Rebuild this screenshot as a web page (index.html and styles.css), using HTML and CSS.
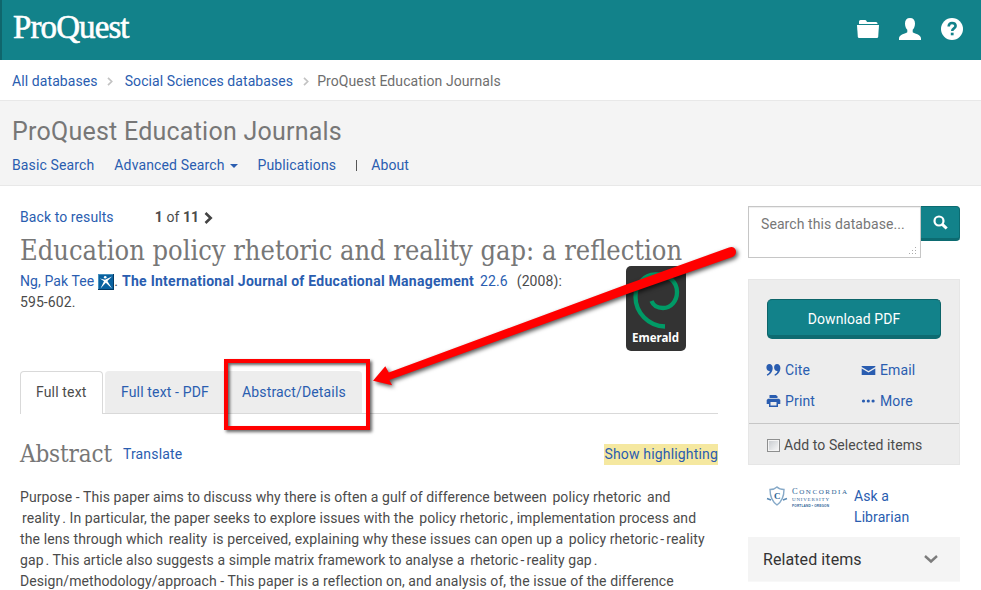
FILE: index.html
```html
<!DOCTYPE html>
<html lang="en">
<head>
<meta charset="utf-8">
<title>ProQuest Education Journals</title>
<link rel="stylesheet" href="styles.css">
</head>
<body>
<header class="topbar">
  <span class="logo">ProQuest</span>
  <nav class="top-icons">
    <svg width="24" height="20" viewBox="0 0 24 20" fill="#fff"><path d="M3 5V2.500Q3 1 4.500 1H9q1 0 1.500 1l.5 1h9q1.500 0 1.500 1.500V5z"/><path d="M1 6h22l-.8 11.700q-.1 1.300-1.400 1.300H3.200q-1.300 0-1.400-1.300z"/></svg>
    <svg width="24" height="24" viewBox="0 0 24 24" fill="#fff"><path d="M12 1c3.300 0 5 2 5 5.500 0 2.800-1 5-2.300 6.300v2.500c1.500 1.500 8.300 2 8.300 6.200V23H1v-1.500c0-4.200 6.800-4.700 8.300-6.200v-2.500C8 11.500 7 9.300 7 6.500 7 3 8.700 1 12 1z"/></svg>
    <svg width="24" height="24" viewBox="0 0 24 24"><circle cx="12" cy="12" r="11" fill="#fff"/><path d="M8.700 9.500C8.700 7 10 6 12 6s3.600 1 3.600 3c0 2.400-3.400 2.400-3.400 5" fill="none" stroke="#12828a" stroke-width="2.600"/><rect x="10.800" y="15.700" width="2.800" height="2.600" fill="#12828a"/></svg>
  </nav>
</header>
<nav class="crumbs">
  <a>All databases</a>
  <svg class="sep" width="6" height="9" viewBox="0 0 6 9"><path d="M1 .8 4.700 4.500 1 8.200"/></svg>
  <a>Social Sciences databases</a>
  <svg class="sep" width="6" height="9" viewBox="0 0 6 9"><path d="M1 .8 4.700 4.500 1 8.200"/></svg>
  <span class="here">ProQuest Education Journals</span>
</nav>
<section class="banner">
  <h1>ProQuest Education Journals</h1>
  <nav class="links">
    <a>Basic Search</a>
    <a class="adv">Advanced Search<i class="caret"></i></a>
    <a>Publications</a>
    <i class="bar"></i>
    <a>About</a>
  </nav>
</section>
<div class="page">
  <main>
    <div class="pager"><a>Back to results</a><span class="count"><b>1</b> of <b>11</b></span><svg width="9" height="12" viewBox="0 0 9 12"><path d="M1.500 1 6.700 6l-5.200 5" fill="none" stroke="#444" stroke-width="2.600"/></svg></div>
    <h2>Education policy rhetoric and reality gap: a reflection</h2>
    <div class="source">
      <div class="cite"><a>Ng, Pak Tee</a><svg class="auth" width="16" height="16" viewBox="0 0 16 16"><rect width="16" height="16" fill="#0a62a0"/><path d="M0 .5h16M.5 0v16" stroke="#4690bd"/><path d="M15.500 0v16M0 15.500h16" stroke="#053b66"/><path d="M2 4.500l5 1.200L14 2.500 9.400 7.100l4.600 7.400-6.200-5.700L2.500 14.500 6 7.300z" fill="#fff"/><circle cx="7.200" cy="3.200" r="1.300" fill="#fff"/></svg><span>.</span><a class="journal">The International Journal of Educational Management</a><a class="issue">22.6</a><span>(2008):</span></div>
      <div>595-602.</div>
      <svg class="emerald" width="60" height="85" viewBox="0 0 60 85"><rect width="60" height="85" rx="5" fill="#333"/><path d="M39 60.500C22 60 9.500 46 9.500 31c0-13 8-22 20-22.500C43 8 51 16 51 26c0 9-6 16-14 16-5 0-9.500-2-11.500-7" fill="none" stroke="#009a66" stroke-width="4.300"/><text x="6" y="76" textLength="47" lengthAdjust="spacingAndGlyphs">Emerald</text></svg>
    </div>
    <div class="tabs"><a class="tab on">Full text</a><a class="tab pdf">Full text - PDF</a><a class="tab last">Abstract/Details</a></div>
    <div class="abs-head"><h3>Abstract</h3><a>Translate</a><a class="show">Show highlighting</a></div>
    <div class="abstract">
      <div>Purpose - This paper aims to discuss why there is often a gulf of difference between <i>policy rhetoric</i> and</div>
      <div><i>reality</i>. In particular, the paper seeks to explore issues with the <i>policy rhetoric</i>, implementation process and</div>
      <div class="wide">the lens through which <i>reality</i> is perceived, explaining why these issues can open up a <i>policy rhetoric</i>-<i class="r">reality</i></div>
      <div><i class="l">gap</i>. This article also suggests a simple matrix framework to analyse a <i>rhetoric</i>-<i>reality gap</i>.</div>
      <div>Design/methodology/approach - This paper is a reflection on, and analysis of, the issue of the difference</div>
    </div>
  </main>
  <aside>
    <div class="search"><div class="field"><span>Search this database...</span><svg width="9" height="9" viewBox="0 0 9 9" fill="#aaa"><path d="M7 1h1v1H7zM7 4h1v1H7zM7 7h1v1H7zM4 4h1v1H4zM4 7h1v1H4zM1 7h1v1H1z"/></svg></div><div class="go"><svg width="15" height="15" viewBox="0 0 15 15" fill="none" stroke="#fff"><circle cx="6" cy="6" r="4.500" stroke-width="2.200"/><path d="m9.300 9.300 4.400 4.200" stroke-width="3"/></svg></div></div>
    <div class="actions">
      <a class="download">Download PDF</a>
      <div class="grid">
        <a><svg width="15" height="14" viewBox="0 0 15 14"><path d="M3.300 1C5.500 1 6.700 2.700 6.700 5c0 3.500-2.300 6.600-5.500 7.700L.8 11.600c1.800-.9 2.900-2.200 3-3.600C1.800 8.300.4 6.600.4 4.500.4 2.500 1.500 1 3.300 1z"/><path d="M11 1c2.200 0 3.400 1.700 3.400 4 0 3.500-2.300 6.600-5.500 7.700l-.4-1.100c1.800-.9 2.900-2.200 3-3.600-2 .3-3.400-1.400-3.400-3.500C8.100 2.500 9.200 1 11 1z"/></svg>Cite</a>
        <a><svg width="15" height="14" viewBox="0 0 15 14"><path d="M.7 3h13.600v1L7.500 8 .7 4z"/><path d="M.7 5.500 7.500 9.500l6.800-4V12H.7z"/></svg>Email</a>
        <a><svg width="15" height="14" viewBox="0 0 15 14"><path d="M4 1h6l1.500 1.500V4h-8V1z"/><path fill-rule="evenodd" d="M2 4.800h11l1.300 1.300V10H12v3H3v-3H.7V6.100zM4.500 8v3.600h6V8z"/></svg>Print</a>
        <a><svg width="15" height="14" viewBox="0 0 15 14"><circle cx="2.500" cy="7" r="1.600"/><circle cx="7.300" cy="7" r="1.600"/><circle cx="12.100" cy="7" r="1.600"/></svg>More</a>
      </div>
      <label class="select"><i class="box"></i><span>Add to Selected items</span></label>
    </div>
    <div class="librarian">
      <svg width="82" height="26" viewBox="0 0 82 26" fill="#2d6396"><path d="M11 1C9 3 6 3.500 4 3.500c0 7 1.500 11.500 7 15.500 5.500-4 7-8.500 7-15.500-2 0-5-.5-7-2.500z" fill="none" stroke="#86a9c8" stroke-width="1.400"/><path d="M1 12.500l4 1.500M21 12.500l-4 1.500" stroke="#5c8bb5" stroke-width="1.500"/><text x="8" y="12.500" font-size="9" font-weight="700">C</text><text x="26" y="8" font-size="8.500" textLength="55">C<tspan font-size="7">ONCORDIA</tspan></text><text x="26" y="14.500" font-size="5" textLength="37">UNIVERSITY</text><text class="place" x="26" y="21" font-size="3.200" textLength="37">PORTLAND • OREGON</text></svg>
      <a>Ask a<br>Librarian</a>
    </div>
    <div class="related"><span>Related items</span><svg width="14" height="9" viewBox="0 0 14 9"><path d="m1 1 6 5.500L13 1" fill="none" stroke="#7c7c7c" stroke-width="2.400"/></svg></div>
  </aside>
</div>
<div class="callout"></div>
<svg class="arrow" width="400" height="170" viewBox="350 235 400 170"><path d="M373 380.700 385.300 366.300 388.800 372.600 627 284.300 729 247.400Q734 246 735.700 250 737 254.500 732.500 257L627 294 389.300 380 392.200 385.300z"/></svg>
</body>
</html>
```
FILE: styles.css
```css
* { box-sizing: border-box; }
body { margin: 0; width: 981px; height: 590px; overflow: hidden; background: #fff; color: #4b4b4b; font: 14px/21px Roboto, sans-serif; letter-spacing: .09px; white-space: nowrap; }
a { color: #2a5db0; }
h1, h2, h3 { margin: 0; font-weight: 400; color: #777; }
svg { display: block; flex: none; }
.topbar { height: 60px; background: #12828a; border-left: 2px solid #0f666c; display: flex; justify-content: space-between; padding: 0 17px 0 11px; }
.logo { font: 33px/54px "Liberation Serif", serif; color: #fff; letter-spacing: -.9px; -webkit-text-stroke: .6px #fff; }
.top-icons { display: flex; align-items: center; gap: 18px; height: 58px; }
.crumbs { height: 40px; padding: 2px 12px 0; display: flex; align-items: center; gap: 10px; }
.sep { fill: none; stroke: #c3c3c3; stroke-width: 1.7; margin: 1px 1.5px 0 -.5px; }
.sep ~ .sep { margin-right: -1.5px; }
.here { color: #6e6e6e; }
.banner { height: 86px; background: #f4f4f4; border: 1px solid #e8e8e8; border-width: 1px 0; padding: 14px 12px 0; }
h1 { font-size: 25px; line-height: 33px; height: 32px; letter-spacing: .24px; }
.links { display: flex; align-items: center; margin-top: 8px; gap: 20px; letter-spacing: .13px; }
.adv { display: flex; align-items: center; gap: 6px; }
.caret { border: 4px solid transparent; border-top-color: #2a5db0; border-bottom: 0; margin: 1px -1px 0 0; }
.bar { width: 1px; height: 11px; background: #555; margin-right: -6px; }
.page { display: flex; padding: 20px 0 0 20px; gap: 30px; }
main { width: 698px; padding-top: 1px; }
.pager { display: flex; align-items: center; }
.count { margin: 0 5px 0 41px; }
h2 { font: 27px/45px "DejaVu Serif Condensed", "DejaVu Serif", serif; height: 43px; letter-spacing: 0; }
.source { position: relative; height: 100px; }
.cite { display: flex; }
.auth { margin: 3px 0 0 4px; }
.journal { font-weight: 700; margin-left: 4px; letter-spacing: .26px; }
.issue { margin: 0 9px 0 6px; }
.emerald { position: absolute; left: 606px; top: -5px; }
.emerald text { fill: #fff; font: 700 13px "Noto Sans", sans-serif; letter-spacing: 0; }
.tabs { display: flex; border-bottom: 1px solid #d9d9d9; height: 43px; letter-spacing: .15px; }
.tab { height: 42px; line-height: 42px; padding: 0 15px; background: #ededed; }
.on { height: 43px; width: 83px; border: 1px solid #d9d9d9; border-bottom: 0; border-radius: 4px 4px 0 0; background: #fff; color: #4b4b4b; line-height: 41px; margin-right: 2px; }
.pdf { width: 120px; padding-left: 16px; border-radius: 4px 0 0; }
.last { width: 137px; padding-left: 17px; border-radius: 0 4px 0 0; }
.abs-head { display: flex; align-items: center; height: 40px; margin-top: 20px; letter-spacing: .17px; }
h3 { font: 24px/40px "DejaVu Serif Condensed", "DejaVu Serif", serif; height: 40px; margin-right: 11px; letter-spacing: -.15px; }
.show { background: #f5e8a0; margin-left: auto; }
.abstract { margin-top: 13px; letter-spacing: .075px; }
.abstract .wide { letter-spacing: .11px; }
.abstract i { font-style: normal; padding: 0 2px; }
.abstract .l { padding-left: 0; }
.abstract .r { padding-right: 0; }
aside { width: 212px; }
.search { display: flex; height: 52px; }
.field { width: 173px; border: 1px solid #c6c6c6; padding: 7px 3px 2px 12px; color: #777; box-shadow: inset 0 1px 1px #eee; display: flex; justify-content: space-between; }
.field svg { align-self: flex-end; margin-left: -9px; }
.go { width: 39px; height: 35px; background: #12828a; border: 1px solid #0c6b71; border-left: 0; border-bottom-width: 3px; border-radius: 0 4px 4px 0; display: grid; place-items: center; }
.actions { margin-top: 21px; height: 186px; background: #ededed; border: 1px solid #e6e6e6; padding-top: 19px; }
.download { display: block; width: 174px; height: 40px; margin-left: 18px; background: #12828a; border: 1px solid #0c6469; border-bottom: 4px solid #0e6b71; border-radius: 5px; color: #fff; line-height: 38px; text-align: center; }
.grid { display: grid; grid-template-columns: 95px 95px; grid-auto-rows: 31px; padding: 16px 0 0 17px; height: 85px; border-bottom: 1px solid #c6c6c6; letter-spacing: .15px; }
.grid a { display: flex; align-items: center; height: 30px; gap: 4px; fill: #2a5db0; }
.select { display: flex; align-items: center; height: 42px; padding-left: 18px; gap: 4px; }
.box { width: 13px; height: 13px; border: 1px solid #8e8f8f; background: linear-gradient(135deg, #c5c9cd, #fafafa); box-shadow: inset 0 0 0 1px #f4f4f4; }
.librarian { display: flex; height: 72px; padding: 21px 0 0 18px; gap: 6px; }
.librarian text { font-family: "Liberation Serif", serif; letter-spacing: 0; }
.librarian .place { font-family: "Liberation Sans", sans-serif; font-weight: 700; }
.related { height: 45px; background: #f4f4f4; display: flex; align-items: center; justify-content: space-between; padding: 0 22px 0 15px; font-size: 16px; color: #333; border-bottom: 1px solid #f8f8f8; }
.callout { position: absolute; left: 224px; top: 359px; width: 146px; height: 71px; border: 4px solid #f00; box-shadow: 2px 2px 3px #0009, inset 2px 2px 3px #0009; }
.arrow { position: absolute; left: 350px; top: 235px; fill: #f00; filter: drop-shadow(2px 2px 2px #000a); }
```
